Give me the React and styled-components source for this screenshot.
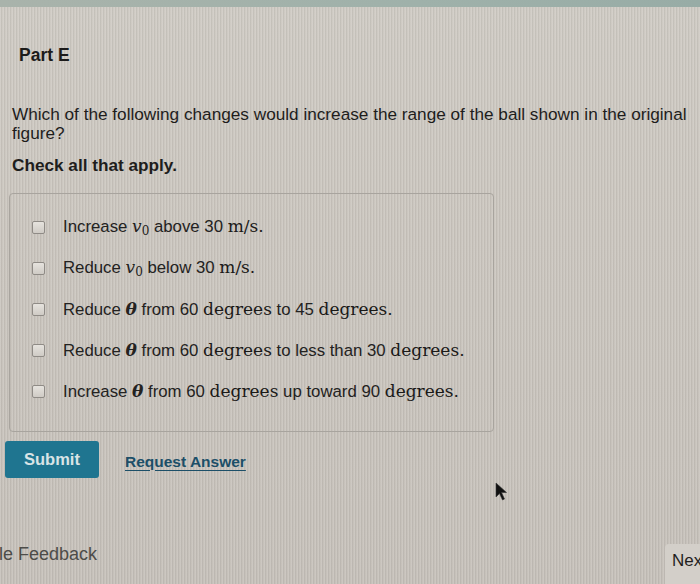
import React from "react";
import styled, { createGlobalStyle } from "styled-components";

const Global = createGlobalStyle`
  html, body { margin: 0; padding: 0; }
  body {
    width: 700px; height: 584px; overflow: hidden;
    font-family: "Liberation Sans", Arial, sans-serif;
  }
`;

const Screen = styled.div`
  position: relative;
  width: 700px;
  height: 584px;
  overflow: hidden;
  display: flex;
  flex-direction: column;
  background:
    repeating-linear-gradient(90deg, rgba(255,255,255,0.10) 0 1px, rgba(0,0,0,0.05) 1px 2px, rgba(0,0,0,0) 2px 3px),
    linear-gradient(180deg, #cfcbc4 0%, #cbc6bf 40%, #c6c1ba 100%);
  color: #1e1d1c;
`;

const TopStrip = styled.div`
  height: 7px;
  background: linear-gradient(90deg, #a9b3ab, #9fb1aa 60%, #98aca6);
  flex: none;
`;

const Content = styled.div`
  display: flex;
  flex-direction: column;
  padding: 0 0 0 12px;
`;

const PartTitle = styled.h2`
  margin: 38px 0 0 7px;
  font-size: 17.5px;
  font-weight: 700;
  line-height: 20px;
  color: #1c1b1a;
`;

const Question = styled.p`
  margin: 40px 0 0 0;
  font-size: 17.2px;
  line-height: 19px;
  color: #1e1d1c;
  width: 685px;
`;

const Instruction = styled.p`
  margin: 13px 0 0 0;
  font-size: 17.2px;
  font-weight: 700;
  line-height: 19px;
`;

const OptionBox = styled.div`
  margin: 18px 0 0 -3px;
  width: 485px;
  height: 239px;
  box-sizing: border-box;
  border: 1px solid #a8a49e;
  border-radius: 4px;
  padding: 22px 0 0 22px;
  display: flex;
  flex-direction: column;
  gap: 19px;
`;

const Option = styled.label`
  display: flex;
  align-items: center;
  gap: 18px;
  height: 22px;
  font-size: 16.8px;
  color: #232221;
`;

const Box = styled.span`
  width: 11px;
  height: 11px;
  flex: none;
  border: 1px solid #8f8b86;
  border-radius: 2px;
  background: linear-gradient(180deg, #e6e3de, #cfcbc5);
`;

const Math = styled.span`
  font-family: "DejaVu Serif", "Liberation Serif", serif;
  font-size: 17px;
  color: #1a1918;
`;

const Var = styled.i`
  font-family: "DejaVu Serif", "Liberation Serif", serif;
  font-size: 17px;
  font-weight: ${(p) => (p.$bold ? 700 : 400)};
`;

const Sub = styled.sub`
  font-size: 12px;
  font-style: normal;
  vertical-align: -3px;
`;

const Actions = styled.div`
  display: flex;
  align-items: center;
  gap: 26px;
  margin: 9px 0 0 -7px;
`;

const SubmitButton = styled.button`
  width: 94px;
  height: 37px;
  border: none;
  border-radius: 3px;
  background: #1f7590;
  color: #d9e4e6;
  font-family: "Liberation Sans", Arial, sans-serif;
  font-size: 16.5px;
  font-weight: 700;
  padding: 0;
`;

const LinkText = styled.a`
  color: #1c4f68;
  font-size: 15.5px;
  font-weight: 700;
  text-decoration: underline;
  text-underline-offset: 3px;
  margin-top: 4px;
`;

const Footer = styled.div`
  margin-top: auto;
  height: 40px;
  display: flex;
  justify-content: space-between;
  align-items: flex-start;
`;

const FeedbackText = styled.span`
  margin: 0 0 0 -1px;
  font-size: 18px;
  color: #4d4c49;
`;

const NextButton = styled.div`
  width: 35px;
  height: 40px;
  box-sizing: border-box;
  padding: 7px 0 0 7px;
  background: #d3cfc9;
  border-radius: 4px 0 0 0;
  font-size: 17px;
  color: #1f1e1d;
  white-space: nowrap;
  overflow: hidden;
`;

const Cursor = styled.svg`
  position: absolute;
  left: 495px;
  top: 482px;
`;

const options = [
  [<>Increase </>, <Var>v<Sub>0</Sub></Var>, <> above 30 </>, <Math>m/s.</Math>],
  [<>Reduce </>, <Var>v<Sub>0</Sub></Var>, <> below 30 </>, <Math>m/s.</Math>],
  [<>Reduce </>, <Var $bold>θ</Var>, <> from 60 </>, <Math>degrees</Math>, <> to 45 </>, <Math>degrees.</Math>],
  [<>Reduce </>, <Var $bold>θ</Var>, <> from 60 </>, <Math>degrees</Math>, <> to less than 30 </>, <Math>degrees.</Math>],
  [<>Increase </>, <Var $bold>θ</Var>, <> from 60 </>, <Math>degrees</Math>, <> up toward 90 </>, <Math>degrees.</Math>],
];

export default function App() {
  return (
    <Screen>
      <Global />
      <TopStrip />
      <Content>
        <PartTitle>Part E</PartTitle>
        <Question>
          Which of the following changes would increase the range of the ball shown in the original figure?
        </Question>
        <Instruction>Check all that apply.</Instruction>
        <OptionBox>
          {options.map((parts, i) => (
            <Option key={i}>
              <Box />
              <span>
                {parts.map((p, j) => (
                  <React.Fragment key={j}>{p}</React.Fragment>
                ))}
              </span>
            </Option>
          ))}
        </OptionBox>
        <Actions>
          <SubmitButton>Submit</SubmitButton>
          <LinkText>Request Answer</LinkText>
        </Actions>
      </Content>
      <Footer>
        <FeedbackText>le Feedback</FeedbackText>
        <NextButton>Next</NextButton>
      </Footer>
      <Cursor width="14" height="20" viewBox="0 0 14 20">
        <path d="M1 1 L1 15 L4.5 11.5 L7.5 18 L9.5 17 L6.5 10.5 L11.5 10.5 Z" fill="#111" stroke="#333" strokeWidth="0.6" />
      </Cursor>
    </Screen>
  );
}
